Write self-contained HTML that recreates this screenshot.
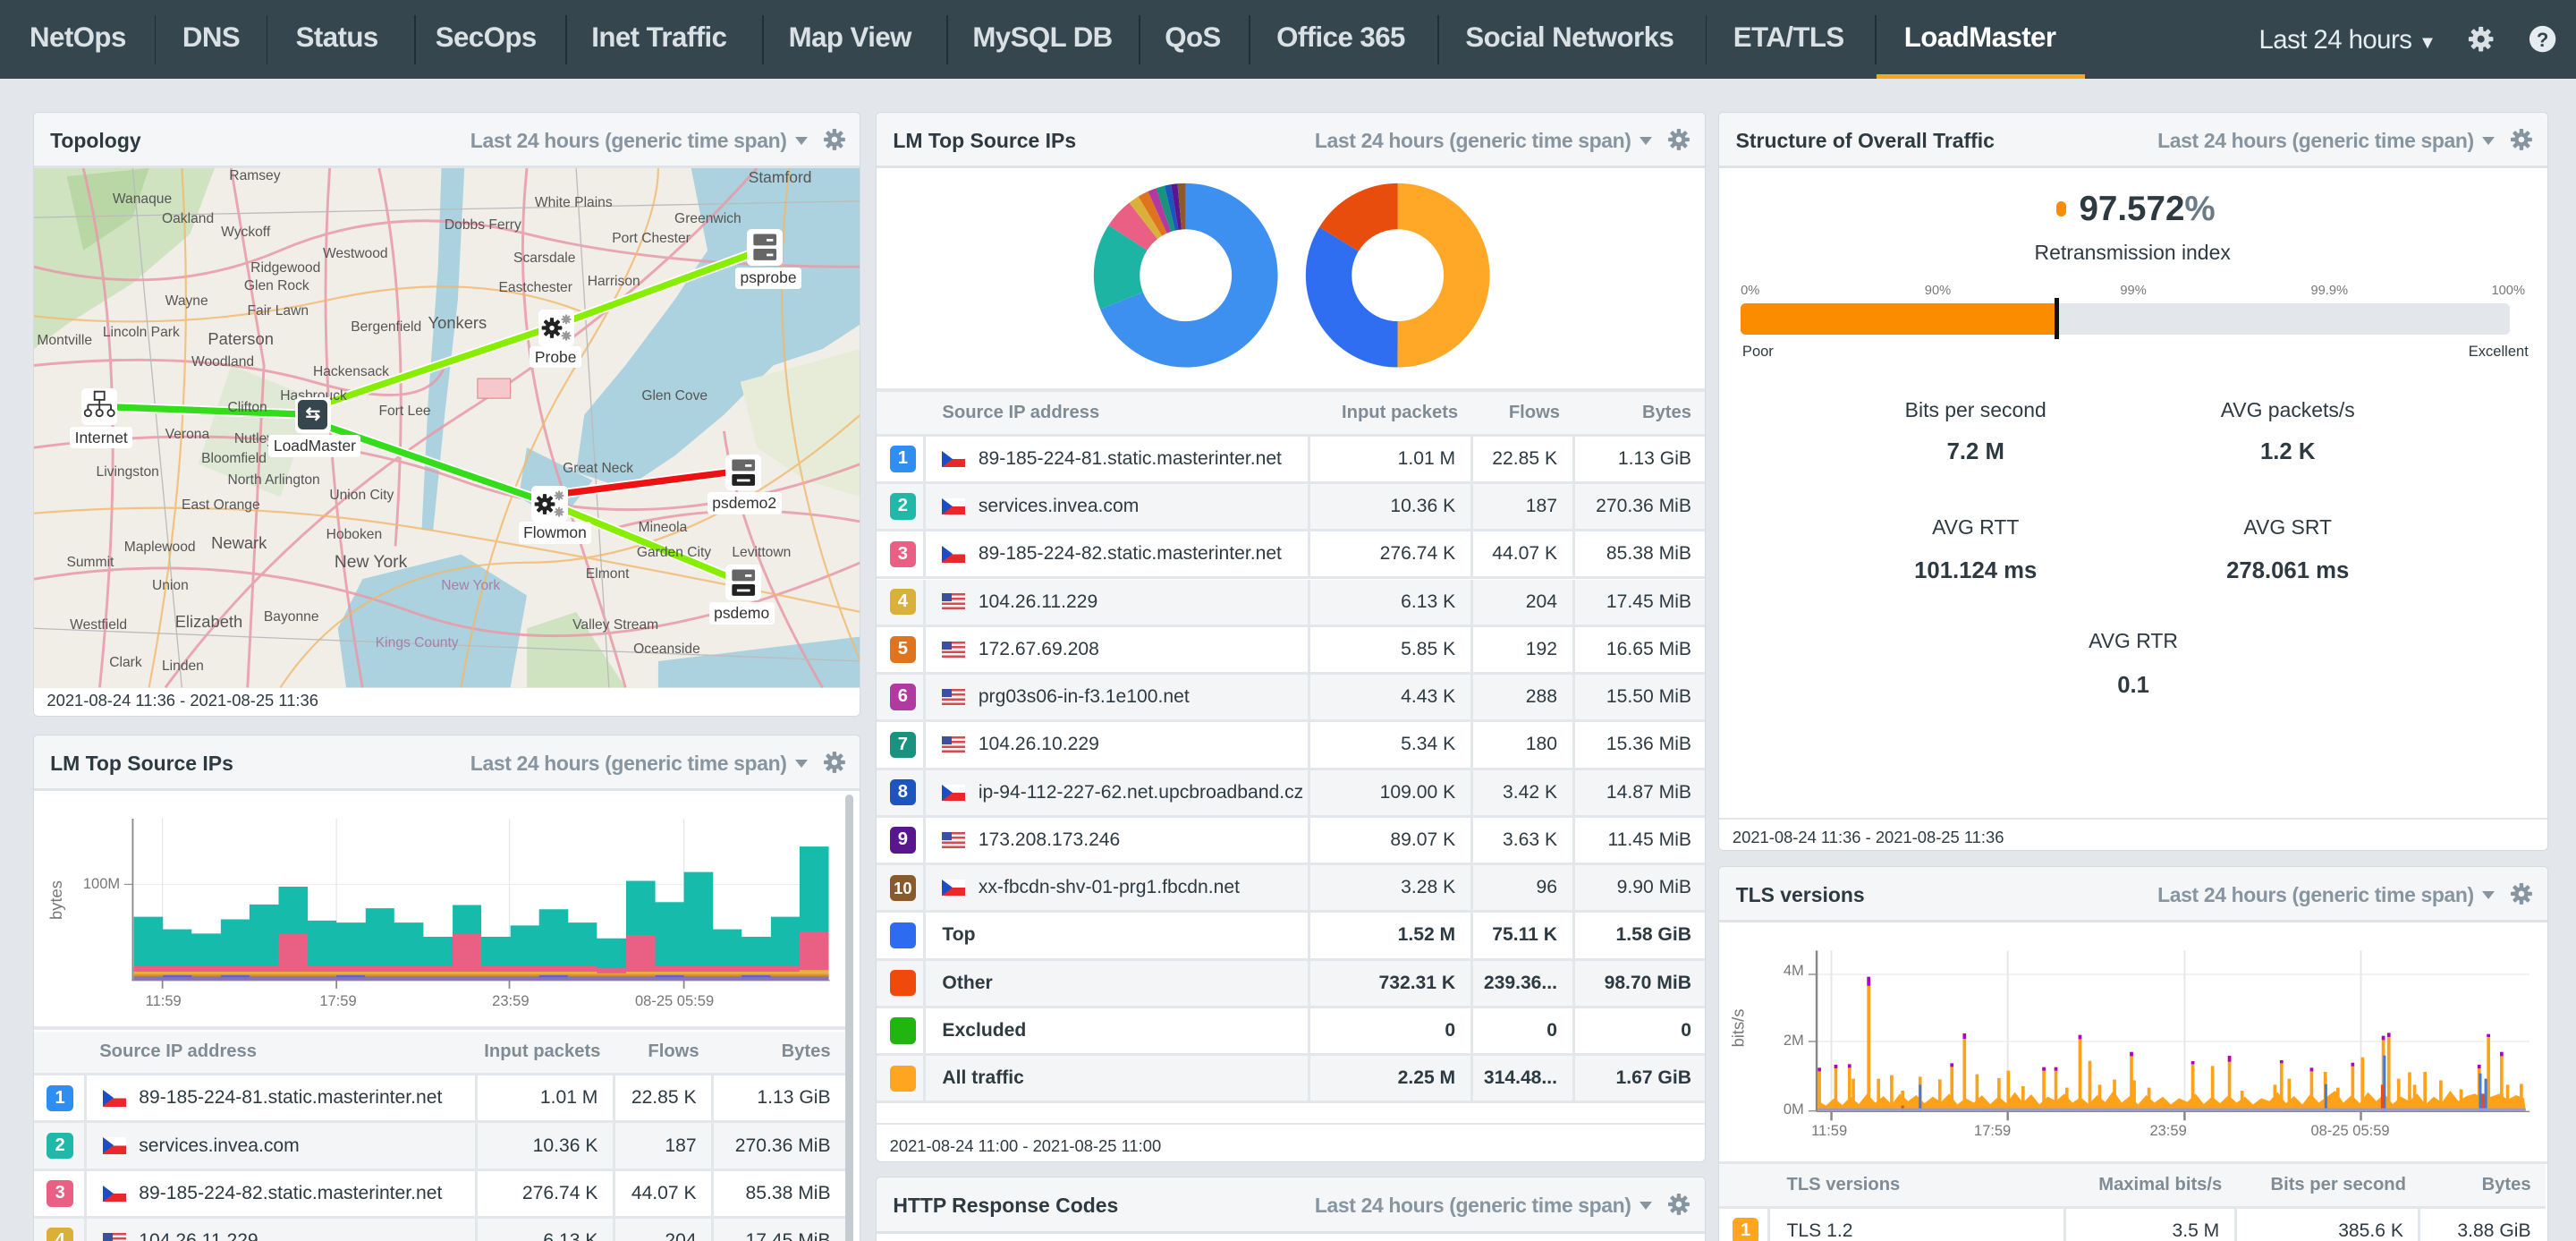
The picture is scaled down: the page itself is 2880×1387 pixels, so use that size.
<!DOCTYPE html>
<html><head><meta charset="utf-8">
<style>
*{box-sizing:border-box;margin:0;padding:0}
html,body{width:2880px;height:1387px;overflow:hidden;background:#e3e6ea}
#w{zoom:1.83673;width:1568px;height:755px;position:relative;overflow:hidden;font-family:"Liberation Sans",Arial,sans-serif;color:#2d3a42;background:#e3e6ea}
.a{position:absolute}
#nav{left:0;top:0;width:1568px;height:48px;background:#36464f}
.tab{position:absolute;top:13px;font-size:17px;font-weight:bold;color:#d9e1e5;white-space:nowrap;letter-spacing:-0.3px}
.sep{position:absolute;top:9px;width:1px;height:30px;background:#222e35}
.panel{position:absolute;background:#fff;border:1px solid #d5dade;border-radius:3px;overflow:hidden}
.ph{position:absolute;left:0;top:0;right:0;height:34px;background:#f5f6f8;border-bottom:2px solid #dfe3e7}
.pt{position:absolute;left:10px;top:10px;font-size:12.5px;font-weight:bold;color:#2d3a42}
.pr{position:absolute;right:32px;top:10px;font-size:12.5px;font-weight:bold;color:#8695a0;white-space:nowrap;letter-spacing:-0.2px}
.pr:after{content:"";display:inline-block;margin-left:5px;border-left:4px solid transparent;border-right:4px solid transparent;border-top:5px solid #8695a0;vertical-align:2px}
.gear{position:absolute;right:9px;top:10px;width:13px;height:13px}
.row{position:absolute;left:0;right:0;height:29px;display:flex;font-size:11.5px;color:#2d3a42;border-bottom:2px solid #e3e6ea}
.row>div{border-right:2px solid #e3e6ea;display:flex;align-items:center;white-space:nowrap;overflow:hidden}
.row>div:last-child{border-right:none}
.r{justify-content:flex-end;padding-right:9px}
.alt{background:#f3f5f7}
.hd{color:#7f8c95;font-weight:bold;font-size:11px;background:#f5f6f8}
.hd>div{border-right:none}
.b{font-weight:bold}
.bd{display:inline-block;width:16px;height:16px;border-radius:3px;color:#fff;font-size:11px;font-weight:bold;text-align:center;line-height:16px;margin-left:8px}
.sq{display:inline-block;width:16px;height:16px;border-radius:3px;margin-left:8px}
.fl{display:inline-block;width:14px;height:10px;margin:0 8px 0 10px;vertical-align:middle}
.cz{background:linear-gradient(to bottom,#fff 50%,#e8282b 50%);position:relative;overflow:hidden}
.cz:before{content:"";position:absolute;left:0;top:0;border-top:5px solid transparent;border-bottom:5px solid transparent;border-left:7px solid #1a4fc4}
.us{background:linear-gradient(to right,#3c4fa0 0 6px,transparent 6px) top left/14px 5px no-repeat,repeating-linear-gradient(to bottom,#d84a4f 0 1.4px,#f4f4f4 1.4px 2.8px)}
.foot{position:absolute;font-size:10px;color:#2d3a42}
.st{position:absolute;font-size:12.5px;color:#2d3a42;text-align:center;width:160px}
.sv{position:absolute;font-size:14px;font-weight:bold;color:#2d3a42;text-align:center;width:160px}
.ml{position:absolute;font-size:8.5px;color:#555;white-space:nowrap}
.nl{position:absolute;background:#fff;font-size:9.5px;color:#333;padding:1px 3px;border-radius:2px;white-space:nowrap}
.ni{position:absolute;background:#fff;border-radius:3px;width:22px;height:22px}
.ax{position:absolute;font-size:9px;color:#777;white-space:nowrap}
</style></head><body><div id="w">

<div id="nav" class="a">
<div class="tab" style="left:18px">NetOps</div><div class="sep" style="left:94px"></div>
<div class="tab" style="left:111px">DNS</div><div class="sep" style="left:162px"></div>
<div class="tab" style="left:180px">Status</div><div class="sep" style="left:252px"></div>
<div class="tab" style="left:265px">SecOps</div><div class="sep" style="left:344px"></div>
<div class="tab" style="left:360px">Inet Traffic</div><div class="sep" style="left:464px"></div>
<div class="tab" style="left:480px">Map View</div><div class="sep" style="left:576px"></div>
<div class="tab" style="left:592px">MySQL DB</div><div class="sep" style="left:693px"></div>
<div class="tab" style="left:709px">QoS</div><div class="sep" style="left:760px"></div>
<div class="tab" style="left:777px">Office 365</div><div class="sep" style="left:875px"></div>
<div class="tab" style="left:892px">Social Networks</div><div class="sep" style="left:1038px"></div>
<div class="tab" style="left:1055px">ETA/TLS</div><div class="sep" style="left:1141px"></div>
<div class="tab" style="left:1159px;color:#fff">LoadMaster</div>
<div class="a" style="left:1142px;top:45px;width:127px;height:3px;background:#f5a623"></div>
<div class="tab" style="left:1375px;font-weight:normal;font-size:16px;top:15px;color:#e6ecef">Last 24 hours <span style="font-size:11px">▼</span></div>
<svg class="a" style="left:1502px;top:16px" width="16" height="16" viewBox="0 0 16 16"><g fill="#d9e1e5"><circle cx="8" cy="8" r="5.2"/><rect x="6.6" y="0.5" width="2.8" height="15" rx="0.6"/><rect x="6.6" y="0.5" width="2.8" height="15" rx="0.6" transform="rotate(45 8 8)"/><rect x="6.6" y="0.5" width="2.8" height="15" rx="0.6" transform="rotate(90 8 8)"/><rect x="6.6" y="0.5" width="2.8" height="15" rx="0.6" transform="rotate(135 8 8)"/></g><circle cx="8" cy="8" r="2.2" fill="#36464f"/></svg>
<svg class="a" style="left:1539px;top:15px" width="17" height="17" viewBox="0 0 17 17"><circle cx="8.5" cy="8.5" r="8" fill="#e6ecef"/><text x="8.5" y="13" text-anchor="middle" font-size="12" font-weight="bold" fill="#36464f" font-family="Liberation Sans">?</text></svg>
</div>

<svg width="0" height="0" style="position:absolute"><defs><g id="gr"><circle cx="6.5" cy="6.5" r="4.2"/><rect x="5.3" y="0" width="2.4" height="13" rx="0.5"/><rect x="5.3" y="0" width="2.4" height="13" rx="0.5" transform="rotate(45 6.5 6.5)"/><rect x="5.3" y="0" width="2.4" height="13" rx="0.5" transform="rotate(90 6.5 6.5)"/><rect x="5.3" y="0" width="2.4" height="13" rx="0.5" transform="rotate(135 6.5 6.5)"/></g></defs></svg>

<!-- Topology -->
<div class="panel" style="left:20px;top:68px;width:504px;height:368px">
<div class="ph"><div class="pt">Topology</div><div class="pr">Last 24 hours (generic time span)</div><svg class="gear" viewBox="0 0 13 13"><use href="#gr" fill="#8695a0"/><circle cx="6.5" cy="6.5" r="1.8" fill="#f5f6f8"/></svg></div>
<div class="a" style="left:0;top:34px;width:503px;height:316px;background:#f1eee8;overflow:hidden">
<svg width="503" height="316" viewBox="0 0 503 316" style="position:absolute;left:0;top:0">
<path d="M0 0 L110 0 L95 40 L60 70 L20 95 L0 110Z" fill="#cfe3c0"/>
<path d="M20 5 L70 0 L60 30 L30 50Z" fill="#b9d7a5"/>
<path d="M120 120 L170 140 L150 200 L100 180Z" fill="#dfe9d5"/>
<path d="M400 0 L503 0 L503 95 L480 110 L450 120 L420 150 L390 175 L360 195 L330 185 L335 150 L360 120 L390 80 L410 50Z" fill="#abd2de"/>
<path d="M430 130 L503 110 L503 200 L470 190 L440 170Z" fill="#e7ecd9"/>
<path d="M248 0 L262 0 L258 80 L250 150 L243 220 L236 220 L240 140 L246 60Z" fill="#abd2de"/>
<path d="M200 250 L260 235 L300 260 L290 316 L190 316 L185 280Z" fill="#abd2de"/>
<path d="M300 170 L340 190 L320 215 L295 200Z" fill="#abd2de"/>
<path d="M300 280 L330 270 L360 316 L300 316Z" fill="#cfe3c0"/>
<path d="M380 300 L503 285 L503 316 L380 316Z" fill="#abd2de"/>
<g fill="none" stroke="#e89aa8" stroke-width="1.6" opacity="0.85">
<path d="M0 60 Q80 80 150 50 T300 40 T503 60"/><path d="M30 0 Q60 120 40 316"/><path d="M120 0 L140 120 L130 316"/><path d="M180 0 Q170 150 200 316"/><path d="M0 170 Q150 150 260 190 T503 180"/><path d="M0 250 Q120 230 230 270 T503 240"/><path d="M300 0 Q290 100 320 190 T360 316"/><path d="M420 160 Q430 230 480 316"/><path d="M80 316 Q150 220 260 150 T440 0"/><path d="M0 120 Q100 110 170 130 T250 120"/><path d="M350 220 Q420 200 503 215"/><path d="M210 0 Q230 90 220 230"/>
</g>
<g fill="none" stroke="#f2b86a" stroke-width="1.2" opacity="0.8">
<path d="M0 90 Q90 100 180 80 T340 90"/><path d="M90 0 Q100 160 70 316"/><path d="M0 210 Q120 200 240 220 T503 270"/><path d="M260 316 Q280 200 330 120 T380 0"/><path d="M150 316 Q200 240 300 240 T503 150"/><path d="M460 0 Q440 150 503 300"/>
</g>
<g fill="none" stroke="#bbb" stroke-width="0.7"><path d="M0 30 L503 20"/><path d="M0 280 L503 300"/><path d="M60 0 L90 316"/><path d="M330 0 L350 316"/></g>
<line x1="40" y1="145" x2="170" y2="150" stroke="#fff" stroke-width="6"/>
<line x1="40" y1="145" x2="170" y2="150" stroke="#33dd1a" stroke-width="4"/>
<g stroke-linecap="butt">
<line x1="172" y1="145" x2="317" y2="96" stroke="#fff" stroke-width="6"/><line x1="172" y1="145" x2="317" y2="96" stroke="#88ee00" stroke-width="4"/>
<line x1="317" y1="96" x2="445" y2="49" stroke="#fff" stroke-width="6"/><line x1="317" y1="96" x2="445" y2="49" stroke="#88ee00" stroke-width="4"/>
<line x1="172" y1="155" x2="314" y2="204" stroke="#fff" stroke-width="6"/><line x1="172" y1="155" x2="314" y2="204" stroke="#33dd1a" stroke-width="4"/>
<line x1="314" y1="199" x2="431" y2="184" stroke="#fff" stroke-width="6"/><line x1="314" y1="199" x2="431" y2="184" stroke="#ee1111" stroke-width="4"/>
<line x1="314" y1="204" x2="431" y2="252" stroke="#fff" stroke-width="6"/><line x1="314" y1="204" x2="431" y2="252" stroke="#88ee00" stroke-width="4"/>
</g>
<rect x="270" y="128" width="20" height="12" fill="#f4c8cc" stroke="#d88" stroke-width="0.6"/>
</svg>
<div class="ml" style="left:119px;top:0px">Ramsey</div><div class="ml" style="left:435px;top:0px;font-size:9.5px">Stamford</div>
<div class="ml" style="left:48px;top:14px">Wanaque</div><div class="ml" style="left:78px;top:26px">Oakland</div>
<div class="ml" style="left:305px;top:16px">White Plains</div><div class="ml" style="left:390px;top:26px">Greenwich</div>
<div class="ml" style="left:250px;top:30px">Dobbs Ferry</div><div class="ml" style="left:352px;top:38px">Port Chester</div>
<div class="ml" style="left:114px;top:34px">Wyckoff</div><div class="ml" style="left:176px;top:47px">Westwood</div><div class="ml" style="left:292px;top:50px">Scarsdale</div>
<div class="ml" style="left:132px;top:56px">Ridgewood</div><div class="ml" style="left:337px;top:64px">Harrison</div>
<div class="ml" style="left:128px;top:67px">Glen Rock</div><div class="ml" style="left:283px;top:68px">Eastchester</div>
<div class="ml" style="left:80px;top:76px">Wayne</div><div class="ml" style="left:130px;top:82px">Fair Lawn</div>
<div class="ml" style="left:240px;top:88px;font-size:10px">Yonkers</div><div class="ml" style="left:193px;top:92px">Bergenfield</div>
<div class="ml" style="left:42px;top:95px">Lincoln Park</div><div class="ml" style="left:2px;top:100px">Montville</div>
<div class="ml" style="left:106px;top:98px;font-size:10px">Paterson</div><div class="ml" style="left:96px;top:113px">Woodland</div>
<div class="ml" style="left:170px;top:119px">Hackensack</div><div class="ml" style="left:150px;top:134px">Hasbrouck</div>
<div class="ml" style="left:370px;top:134px">Glen Cove</div><div class="ml" style="left:118px;top:141px">Clifton</div>
<div class="ml" style="left:210px;top:143px">Fort Lee</div><div class="ml" style="left:80px;top:157px">Verona</div>
<div class="ml" style="left:122px;top:160px">Nutley</div><div class="ml" style="left:102px;top:172px">Bloomfield</div>
<div class="ml" style="left:38px;top:180px">Livingston</div><div class="ml" style="left:322px;top:178px">Great Neck</div>
<div class="ml" style="left:118px;top:185px">North Arlington</div><div class="ml" style="left:180px;top:194px">Union City</div>
<div class="ml" style="left:90px;top:200px">East Orange</div><div class="ml" style="left:368px;top:214px">Mineola</div>
<div class="ml" style="left:55px;top:226px">Maplewood</div><div class="ml" style="left:108px;top:222px;font-size:10px">Newark</div>
<div class="ml" style="left:178px;top:218px">Hoboken</div><div class="ml" style="left:367px;top:229px">Garden City</div><div class="ml" style="left:425px;top:229px">Levittown</div>
<div class="ml" style="left:20px;top:235px">Summit</div><div class="ml" style="left:183px;top:234px;font-size:10.5px">New York</div>
<div class="ml" style="left:72px;top:249px">Union</div><div class="ml" style="left:248px;top:249px;color:#a57fa8">New York</div><div class="ml" style="left:336px;top:242px">Elmont</div>
<div class="ml" style="left:86px;top:270px;font-size:10px">Elizabeth</div><div class="ml" style="left:140px;top:268px">Bayonne</div>
<div class="ml" style="left:22px;top:273px">Westfield</div><div class="ml" style="left:328px;top:273px">Valley Stream</div>
<div class="ml" style="left:365px;top:288px">Oceanside</div><div class="ml" style="left:208px;top:284px;color:#a57fa8">Kings County</div>
<div class="ml" style="left:46px;top:296px">Clark</div><div class="ml" style="left:78px;top:298px">Linden</div>
<!-- nodes -->
<div class="ni" style="left:29px;top:134px"><svg width="22" height="22" viewBox="0 0 22 22" fill="none" stroke="#333" stroke-width="1"><rect x="8" y="2" width="6" height="5"/><path d="M11 7v3M4 10h14M4 10v3M11 10v3M18 10v3"/><circle cx="4" cy="15" r="2"/><circle cx="11" cy="15" r="2"/><circle cx="18" cy="15" r="2"/></svg></div>
<div class="nl" style="left:22px;top:157px">Internet</div>
<div class="ni" style="left:159px;top:139px;padding:2px"><div style="width:18px;height:18px;background:#36464f;border-radius:3px;color:#fff;font-size:11px;line-height:18px;text-align:center;font-weight:bold">⇆</div></div>
<div class="nl" style="left:143px;top:162px">LoadMaster</div>
<div class="ni" style="left:307px;top:86px"><svg width="22" height="22" viewBox="0 0 22 22"><use href="#gr" fill="#222" transform="translate(2 5) scale(0.95)"/><circle cx="8.2" cy="11.2" r="1.5" fill="#fff"/><use href="#gr" fill="#999" transform="translate(14 3) scale(0.45)"/><use href="#gr" fill="#999" transform="translate(14 13) scale(0.45)"/></svg></div>
<div class="nl" style="left:302px;top:108px">Probe</div>
<div class="ni" style="left:434px;top:37px"><svg width="22" height="22" viewBox="0 0 22 22"><rect x="4" y="3" width="14" height="7" rx="1" fill="#666"/><rect x="4" y="12" width="14" height="7" rx="1" fill="#666"/><rect x="12" y="6" width="4" height="1.5" fill="#fff"/><rect x="12" y="15" width="4" height="1.5" fill="#fff"/></svg></div>
<div class="nl" style="left:427px;top:60px">psprobe</div>
<div class="ni" style="left:303px;top:193px"><svg width="22" height="22" viewBox="0 0 22 22"><use href="#gr" fill="#222" transform="translate(2 5) scale(0.95)"/><circle cx="8.2" cy="11.2" r="1.5" fill="#fff"/><use href="#gr" fill="#999" transform="translate(14 3) scale(0.45)"/><use href="#gr" fill="#999" transform="translate(14 13) scale(0.45)"/></svg></div>
<div class="nl" style="left:295px;top:215px">Flowmon</div>
<div class="ni" style="left:421px;top:174px"><svg width="22" height="22" viewBox="0 0 22 22"><rect x="4" y="3" width="14" height="7" rx="1" fill="#666"/><rect x="4" y="12" width="14" height="7" rx="1" fill="#222"/><rect x="12" y="6" width="4" height="1.5" fill="#fff"/><rect x="7" y="15" width="8" height="1.5" fill="#fff"/></svg></div>
<div class="nl" style="left:410px;top:197px">psdemo2</div>
<div class="ni" style="left:421px;top:241px"><svg width="22" height="22" viewBox="0 0 22 22"><rect x="4" y="3" width="14" height="7" rx="1" fill="#666"/><rect x="4" y="12" width="14" height="7" rx="1" fill="#222"/><rect x="12" y="6" width="4" height="1.5" fill="#fff"/><rect x="7" y="15" width="8" height="1.5" fill="#fff"/></svg></div>
<div class="nl" style="left:411px;top:264px">psdemo</div>
</div>
<div class="foot" style="left:8px;top:352px">2021-08-24 11:36 - 2021-08-25 11:36</div>
</div>

<!-- LM Top Source IPs left -->
<div class="panel" style="left:20px;top:447px;width:504px;height:320px">
<div class="ph"><div class="pt">LM Top Source IPs</div><div class="pr">Last 24 hours (generic time span)</div><svg class="gear" viewBox="0 0 13 13"><use href="#gr" fill="#8695a0"/><circle cx="6.5" cy="6.5" r="1.8" fill="#f5f6f8"/></svg></div>
<div class="a" style="left:494px;top:36px;width:5px;height:290px;background:#c5cbd0;border-radius:3px"></div>
<svg class="a" style="left:-3.7px;top:-0.6px" width="506.3" height="308.7" viewBox="0 0 1568 1568" preserveAspectRatio="none">
<g stroke="#e6e6e6" stroke-width="2"><line x1="254" y1="260" x2="254" y2="760"/><line x1="582" y1="260" x2="582" y2="760"/><line x1="908" y1="260" x2="908" y2="760"/><line x1="1237" y1="260" x2="1237" y2="760"/><line x1="198" y1="463" x2="1510" y2="463"/></g>
<path d="M200 760 V563 H255 V602 H309 V615 H364 V571 H418 V525 H473 V470 H528 V575 H582 V581 H637 V537 H691 V581 H746 V625 H801 V527 H855 V625 H910 V590 H964 V540 H1019 V581 H1073 V630 H1128 V452 H1183 V518 H1237 V425 H1292 V602 H1346 V625 H1401 V563 H1455 V346 H1510 V760Z" fill="#16bbab"/>
<path d="M200 760 V716 H473 V615 H528 V716 H801 V615 H855 V716 H1073 V722 H1128 V620 H1183 V716 H1455 V610 H1510 V760Z" fill="#ea5f84"/>
<path d="M200 760 V733 H1073 V738 H1128 V733 H1455 V728 H1510 V760Z" fill="#e3b341"/>
<path d="M200 760 V740 H1510 V760Z" fill="#f08a28"/>
<path d="M200 760 V746 H1510 V760Z" fill="#6d9a5a"/>
<path d="M200 760 V750 H1510 V760Z" fill="#8a6fc8"/>
<g fill="#5e5ee0"><rect x="255" y="744" width="54" height="6"/><rect x="364" y="744" width="54" height="6"/><rect x="582" y="744" width="54" height="6"/><rect x="964" y="744" width="54" height="6"/><rect x="1183" y="744" width="54" height="6"/><rect x="1346" y="744" width="54" height="6"/></g>
<g stroke="#888" stroke-width="3"><line x1="198" y1="260" x2="198" y2="760"/><line x1="196" y1="760" x2="1512" y2="760"/><line x1="182" y1="463" x2="198" y2="463"/><line x1="254" y1="760" x2="254" y2="785"/><line x1="582" y1="760" x2="582" y2="785"/><line x1="908" y1="760" x2="908" y2="785"/><line x1="1237" y1="760" x2="1237" y2="785"/></g>
</svg>
<div class="ax" style="left:30px;top:85px">100M</div>
<div class="ax" style="left:2px;top:94px;transform:rotate(-90deg);font-size:10px">bytes</div>
<div class="ax" style="left:68px;top:156px">11:59</div><div class="ax" style="left:174px;top:156px">17:59</div><div class="ax" style="left:279px;top:156px">23:59</div><div class="ax" style="left:366px;top:156px">08-25 05:59</div>
<div class="a" style="left:0;top:177px;width:494px;height:2px;background:#e3e6ea"></div>
<div class="a" style="left:0;top:180px;width:494px;height:200px">
<div class="row hd" style="top:0;height:27px"><div style="width:32px"></div><div style="width:238px;padding-left:8px">Source IP address</div><div class="r" style="width:84px">Input packets</div><div class="r" style="width:60px">Flows</div><div class="r" style="width:80px">Bytes</div></div>
<div class="row" style="top:27px"><div style="width:32px"><span class="bd" style="background:#2f8ff0">1</span></div><div style="width:238px"><span class="fl cz"></span>89-185-224-81.static.masterinter.net</div><div class="r" style="width:84px">1.01 M</div><div class="r" style="width:60px">22.85 K</div><div class="r" style="width:80px">1.13 GiB</div></div>
<div class="row alt" style="top:56px"><div style="width:32px"><span class="bd" style="background:#20b8a8">2</span></div><div style="width:238px"><span class="fl cz"></span>services.invea.com</div><div class="r" style="width:84px">10.36 K</div><div class="r" style="width:60px">187</div><div class="r" style="width:80px">270.36 MiB</div></div>
<div class="row" style="top:85px"><div style="width:32px"><span class="bd" style="background:#ea5f84">3</span></div><div style="width:238px"><span class="fl cz"></span>89-185-224-82.static.masterinter.net</div><div class="r" style="width:84px">276.74 K</div><div class="r" style="width:60px">44.07 K</div><div class="r" style="width:80px">85.38 MiB</div></div>
<div class="row alt" style="top:114px"><div style="width:32px"><span class="bd" style="background:#d9b13a">4</span></div><div style="width:238px"><span class="fl us"></span>104.26.11.229</div><div class="r" style="width:84px">6.13 K</div><div class="r" style="width:60px">204</div><div class="r" style="width:80px">17.45 MiB</div></div>
</div>
</div>

<!-- Middle panel -->
<div class="panel" style="left:533px;top:68px;width:505px;height:639px">
<div class="ph"><div class="pt">LM Top Source IPs</div><div class="pr">Last 24 hours (generic time span)</div><svg class="gear" viewBox="0 0 13 13"><use href="#gr" fill="#8695a0"/><circle cx="6.5" cy="6.5" r="1.8" fill="#f5f6f8"/></svg></div>
<svg class="a" style="left:131px;top:42px" width="114" height="114" viewBox="0 0 114 114">
<g transform="rotate(-90 57 57)" fill="none" stroke-width="28">
<circle cx="57" cy="57" r="42" stroke="#3d8ff0" stroke-dasharray="182 82" stroke-dashoffset="0"/>
<circle cx="57" cy="57" r="42" stroke="#1db4a4" stroke-dasharray="40 224" stroke-dashoffset="-182"/>
<circle cx="57" cy="57" r="42" stroke="#ea5f84" stroke-dasharray="14 250" stroke-dashoffset="-222"/>
<circle cx="57" cy="57" r="42" stroke="#d9b13a" stroke-dasharray="5 259" stroke-dashoffset="-236"/>
<circle cx="57" cy="57" r="42" stroke="#e0741e" stroke-dasharray="5 259" stroke-dashoffset="-241"/>
<circle cx="57" cy="57" r="42" stroke="#b03a9f" stroke-dasharray="4 260" stroke-dashoffset="-246"/>
<circle cx="57" cy="57" r="42" stroke="#17937f" stroke-dasharray="4 260" stroke-dashoffset="-250"/>
<circle cx="57" cy="57" r="42" stroke="#1d55c0" stroke-dasharray="3 261" stroke-dashoffset="-254"/>
<circle cx="57" cy="57" r="42" stroke="#5a168f" stroke-dasharray="3 261" stroke-dashoffset="-257"/>
<circle cx="57" cy="57" r="42" stroke="#8b5a2b" stroke-dasharray="4 260" stroke-dashoffset="-260"/>
</g></svg>
<svg class="a" style="left:260px;top:42px" width="114" height="114" viewBox="0 0 114 114">
<g transform="rotate(-90 57 57)" fill="none" stroke-width="28">
<circle cx="57" cy="57" r="42" stroke="#ffa726" stroke-dasharray="132 132"/>
<circle cx="57" cy="57" r="42" stroke="#2f6ef0" stroke-dasharray="89 175" stroke-dashoffset="-132"/>
<circle cx="57" cy="57" r="42" stroke="#e84d0e" stroke-dasharray="43 221" stroke-dashoffset="-221"/>
</g></svg>
<div class="a" style="left:0;top:168px;width:505px;height:2px;background:#e3e6ea"></div>
<div class="a" style="left:0;top:170px;width:505px;height:440px">
<div class="row hd" style="top:0;height:27px"><div style="width:30px"></div><div style="width:234px;padding-left:10px">Source IP address</div><div class="r" style="width:99px">Input packets</div><div class="r" style="width:62px">Flows</div><div class="r" style="width:80px">Bytes</div></div>
<div class="row" style="top:27px"><div style="width:30px"><span class="bd" style="background:#2f8ff0">1</span></div><div style="width:234px"><span class="fl cz"></span>89-185-224-81.static.masterinter.net</div><div class="r" style="width:99px">1.01 M</div><div class="r" style="width:62px">22.85 K</div><div class="r" style="width:80px">1.13 GiB</div></div>
<div class="row alt" style="top:56px"><div style="width:30px"><span class="bd" style="background:#20b8a8">2</span></div><div style="width:234px"><span class="fl cz"></span>services.invea.com</div><div class="r" style="width:99px">10.36 K</div><div class="r" style="width:62px">187</div><div class="r" style="width:80px">270.36 MiB</div></div>
<div class="row" style="top:85px"><div style="width:30px"><span class="bd" style="background:#ea5f84">3</span></div><div style="width:234px"><span class="fl cz"></span>89-185-224-82.static.masterinter.net</div><div class="r" style="width:99px">276.74 K</div><div class="r" style="width:62px">44.07 K</div><div class="r" style="width:80px">85.38 MiB</div></div>
<div class="row alt" style="top:114px"><div style="width:30px"><span class="bd" style="background:#d9b13a">4</span></div><div style="width:234px"><span class="fl us"></span>104.26.11.229</div><div class="r" style="width:99px">6.13 K</div><div class="r" style="width:62px">204</div><div class="r" style="width:80px">17.45 MiB</div></div>
<div class="row" style="top:143px"><div style="width:30px"><span class="bd" style="background:#e0741e">5</span></div><div style="width:234px"><span class="fl us"></span>172.67.69.208</div><div class="r" style="width:99px">5.85 K</div><div class="r" style="width:62px">192</div><div class="r" style="width:80px">16.65 MiB</div></div>
<div class="row alt" style="top:172px"><div style="width:30px"><span class="bd" style="background:#b03a9f">6</span></div><div style="width:234px"><span class="fl us"></span>prg03s06-in-f3.1e100.net</div><div class="r" style="width:99px">4.43 K</div><div class="r" style="width:62px">288</div><div class="r" style="width:80px">15.50 MiB</div></div>
<div class="row" style="top:201px"><div style="width:30px"><span class="bd" style="background:#17937f">7</span></div><div style="width:234px"><span class="fl us"></span>104.26.10.229</div><div class="r" style="width:99px">5.34 K</div><div class="r" style="width:62px">180</div><div class="r" style="width:80px">15.36 MiB</div></div>
<div class="row alt" style="top:230px"><div style="width:30px"><span class="bd" style="background:#1d55c0">8</span></div><div style="width:234px"><span class="fl cz"></span>ip-94-112-227-62.net.upcbroadband.cz</div><div class="r" style="width:99px">109.00 K</div><div class="r" style="width:62px">3.42 K</div><div class="r" style="width:80px">14.87 MiB</div></div>
<div class="row" style="top:259px"><div style="width:30px"><span class="bd" style="background:#5a168f">9</span></div><div style="width:234px"><span class="fl us"></span>173.208.173.246</div><div class="r" style="width:99px">89.07 K</div><div class="r" style="width:62px">3.63 K</div><div class="r" style="width:80px">11.45 MiB</div></div>
<div class="row alt" style="top:288px"><div style="width:30px"><span class="bd" style="background:#8b5a2b;font-size:10px">10</span></div><div style="width:234px"><span class="fl cz"></span>xx-fbcdn-shv-01-prg1.fbcdn.net</div><div class="r" style="width:99px">3.28 K</div><div class="r" style="width:62px">96</div><div class="r" style="width:80px">9.90 MiB</div></div>
<div class="row b" style="top:317px"><div style="width:30px"><span class="sq" style="background:#2d6cf0"></span></div><div style="width:234px;padding-left:10px">Top</div><div class="r" style="width:99px">1.52 M</div><div class="r" style="width:62px">75.11 K</div><div class="r" style="width:80px">1.58 GiB</div></div>
<div class="row alt b" style="top:346px"><div style="width:30px"><span class="sq" style="background:#f04a0a"></span></div><div style="width:234px;padding-left:10px">Other</div><div class="r" style="width:99px">732.31 K</div><div class="r" style="width:62px">239.36...</div><div class="r" style="width:80px">98.70 MiB</div></div>
<div class="row b" style="top:375px"><div style="width:30px"><span class="sq" style="background:#21b50f"></span></div><div style="width:234px;padding-left:10px">Excluded</div><div class="r" style="width:99px">0</div><div class="r" style="width:62px">0</div><div class="r" style="width:80px">0</div></div>
<div class="row alt b" style="top:404px"><div style="width:30px"><span class="sq" style="background:#ffa51f"></span></div><div style="width:234px;padding-left:10px">All traffic</div><div class="r" style="width:99px">2.25 M</div><div class="r" style="width:62px">314.48...</div><div class="r" style="width:80px">1.67 GiB</div></div>
</div>
<div class="a" style="left:0;top:615px;width:505px;height:1px;background:#e3e6ea"></div>
<div class="foot" style="left:8px;top:623px">2021-08-24 11:00 - 2021-08-25 11:00</div>
</div>

<div class="panel" style="left:533px;top:716px;width:505px;height:60px">
<div class="ph"><div class="pt">HTTP Response Codes</div><div class="pr">Last 24 hours (generic time span)</div><svg class="gear" viewBox="0 0 13 13"><use href="#gr" fill="#8695a0"/><circle cx="6.5" cy="6.5" r="1.8" fill="#f5f6f8"/></svg></div>
</div>

<!-- Structure of Overall Traffic -->
<div class="panel" style="left:1046px;top:68px;width:505px;height:450px">
<div class="ph"><div class="pt">Structure of Overall Traffic</div><div class="pr">Last 24 hours (generic time span)</div><svg class="gear" viewBox="0 0 13 13"><use href="#gr" fill="#8695a0"/><circle cx="6.5" cy="6.5" r="1.8" fill="#f5f6f8"/></svg></div>
<div class="a" style="left:205px;top:54px;width:6px;height:9px;border-radius:3px;background:#fb8c00"></div>
<div class="a" style="left:219px;top:47px;font-size:21px;font-weight:bold;color:#2d3a42">97.572<span style="color:#6b7a85">%</span></div>
<div class="a" style="left:0;width:503px;top:78px;text-align:center;font-size:12.5px">Retransmission index</div>
<div class="ax" style="left:13px;top:104px;font-size:8px">0%</div><div class="ax" style="left:125px;top:104px;font-size:8px">90%</div><div class="ax" style="left:244px;top:104px;font-size:8px">99%</div><div class="ax" style="left:360px;top:104px;font-size:8px">99.9%</div><div class="ax" style="left:470px;top:104px;font-size:8px">100%</div>
<div class="a" style="left:13px;top:116px;width:468px;height:19px;background:#e3e6ea;border-radius:3px"></div>
<div class="a" style="left:13px;top:116px;width:192px;height:19px;background:#fb8c00;border-radius:3px 0 0 3px"></div>
<div class="a" style="left:204px;top:113px;width:3px;height:25px;background:#111"></div>
<div class="a" style="left:14px;top:140px;font-size:9px">Poor</div><div class="a" style="left:456px;top:140px;font-size:9px">Excellent</div>
<div class="st" style="left:76px;top:174px">Bits per second</div><div class="sv" style="left:76px;top:199px">7.2 M</div>
<div class="st" style="left:266px;top:174px">AVG packets/s</div><div class="sv" style="left:266px;top:199px">1.2 K</div>
<div class="st" style="left:76px;top:245px">AVG RTT</div><div class="sv" style="left:76px;top:271px">101.124 ms</div>
<div class="st" style="left:266px;top:245px">AVG SRT</div><div class="sv" style="left:266px;top:271px">278.061 ms</div>
<div class="st" style="left:172px;top:314px">AVG RTR</div><div class="sv" style="left:172px;top:341px">0.1</div>
<div class="a" style="left:0;top:429px;width:505px;height:1px;background:#e3e6ea"></div>
<div class="foot" style="left:8px;top:435px">2021-08-24 11:36 - 2021-08-25 11:36</div>
</div>

<!-- TLS versions -->
<div class="panel" style="left:1046px;top:527px;width:505px;height:250px">
<div class="ph"><div class="pt">TLS versions</div><div class="pr">Last 24 hours (generic time span)</div><svg class="gear" viewBox="0 0 13 13"><use href="#gr" fill="#8695a0"/><circle cx="6.5" cy="6.5" r="1.8" fill="#f5f6f8"/></svg></div>
<svg class="a" style="left:-1.7px;top:-5.4px" width="522.6" height="232.5" viewBox="0 0 1568 1281" preserveAspectRatio="none">
<g stroke="#e6e6e6" stroke-width="3"><line x1="210" y1="310" x2="210" y2="848"/><line x1="532" y1="310" x2="532" y2="848"/><line x1="855" y1="310" x2="855" y2="848"/><line x1="1177" y1="310" x2="1177" y2="848"/><line x1="183" y1="390" x2="1485" y2="390"/><line x1="183" y1="615" x2="1485" y2="615"/></g>
<path d="M186 848 L186 815 200 830 215 805 230 828 245 800 260 825 275 790 290 820 305 798 320 826 335 790 350 815 365 795 380 822 395 800 410 818 425 790 440 826 455 805 470 820 485 795 500 825 515 800 530 822 545 785 560 820 575 792 590 826 605 800 620 815 635 790 650 820 665 802 680 825 695 795 710 818 725 780 740 820 755 798 770 826 785 795 800 820 815 800 830 826 845 805 860 818 875 790 890 825 905 800 920 822 935 795 950 820 965 800 980 826 995 805 1010 815 1025 785 1040 822 1055 798 1070 826 1085 790 1100 820 1115 800 1130 780 1145 820 1160 795 1175 822 1190 785 1205 815 1220 790 1235 825 1250 800 1265 815 1280 790 1295 826 1310 800 1325 820 1340 780 1355 815 1370 798 1385 790 1400 805 1415 800 1430 790 1445 810 1460 795 1475 805 1478 848Z" fill="#ffa21a"/>
<g stroke="#ffa21a" stroke-width="6">
<path d="M188 848V705M218 848V695M243 848V693M278 848V400M296 848V740M320 848V728M372 848V733M408 848V742M430 848V690M453 848V590M476 848V725M516 848V738M533 848V713M598 848V703M620 848V703M664 848V595M682 848V680M727 848V743M758 848V652M763 848V745M870 848V683M906 848V697M937 848V665M1032 848V680M1046 848V740M1087 848V705M1112 848V717M1162 848V688M1180 848V668M1218 848V598M1228 848V588M1246 848V740M1266 848V718M1294 848V717M1323 848V745M1393 848V695M1410 848V592M1434 848V652M1470 848V757M250 848V740M340 848V780M560 848V765M640 848V770M700 848V760M790 848V770M960 848V780M1020 848V760M1135 848V770M1275 848V760M1360 848V775M1445 848V760"/>
</g>
<g fill="#b000c8"><rect x="185" y="703" width="6" height="12"/><rect x="215" y="693" width="6" height="12"/><rect x="240" y="691" width="6" height="12"/><rect x="275" y="398" width="6" height="30"/><rect x="450" y="588" width="6" height="18"/><rect x="661" y="593" width="6" height="14"/><rect x="755" y="650" width="6" height="14"/><rect x="934" y="663" width="6" height="20"/><rect x="1215" y="596" width="6" height="14"/><rect x="1225" y="586" width="6" height="14"/><rect x="1431" y="650" width="6" height="14"/><rect x="1159" y="686" width="6" height="12"/><rect x="1084" y="703" width="6" height="12"/><rect x="427" y="688" width="6" height="12"/><rect x="595" y="701" width="6" height="12"/><rect x="617" y="701" width="6" height="12"/><rect x="867" y="681" width="6" height="10"/><rect x="1029" y="678" width="6" height="10"/><rect x="1390" y="693" width="6" height="12"/><rect x="1407" y="590" width="6" height="10"/></g>
<g stroke="#3d7de0" stroke-width="5"><path d="M372 848V760M1113 848V758M1220 848V662M1395 848V722M1405 848V740"/></g>
<g stroke="#e84d0e" stroke-width="5"><path d="M1216 848V760M1400 848V790M340 848V830"/></g>
<path d="M186 843 H1478" stroke="#8b9be8" stroke-width="8"/>
<g stroke="#888" stroke-width="4"><line x1="183" y1="310" x2="183" y2="850"/><line x1="183" y1="850" x2="1485" y2="850"/><line x1="168" y1="390" x2="183" y2="390"/><line x1="168" y1="615" x2="183" y2="615"/><line x1="168" y1="848" x2="183" y2="848"/><line x1="210" y1="850" x2="210" y2="880"/><line x1="532" y1="850" x2="532" y2="880"/><line x1="855" y1="850" x2="855" y2="880"/><line x1="1177" y1="850" x2="1177" y2="880"/></g>
</svg>
<div class="ax" style="left:39px;top:58px">4M</div><div class="ax" style="left:39px;top:100px">2M</div><div class="ax" style="left:39px;top:142px">0M</div>
<div class="ax" style="left:0px;top:92px;transform:rotate(-90deg);font-size:10px">bits/s</div>
<div class="ax" style="left:56px;top:155px">11:59</div><div class="ax" style="left:155px;top:155px">17:59</div><div class="ax" style="left:262px;top:155px">23:59</div><div class="ax" style="left:360px;top:155px">08-25 05:59</div>
<div class="a" style="left:0;top:179px;width:505px;height:2px;background:#e3e6ea"></div>
<div class="a" style="left:0;top:181px;width:503px;height:80px">
<div class="row hd" style="top:0;height:27px"><div style="width:31px"></div><div style="width:180px;padding-left:10px">TLS versions</div><div class="r" style="width:104px">Maximal bits/s</div><div class="r" style="width:112px">Bits per second</div><div class="r" style="width:76px">Bytes</div></div>
<div class="row" style="top:27px"><div style="width:31px"><span class="bd" style="background:#ffa51f">1</span></div><div style="width:180px;padding-left:10px">TLS 1.2</div><div class="r" style="width:104px">3.5 M</div><div class="r" style="width:112px">385.6 K</div><div class="r" style="width:76px">3.88 GiB</div></div>
</div>
</div>

</div></body></html>
